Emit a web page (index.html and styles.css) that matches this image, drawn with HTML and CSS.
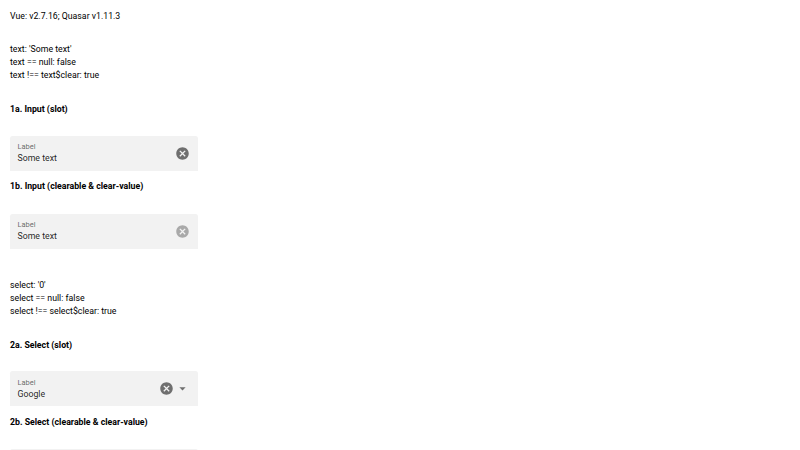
FILE: index.html
```html
<!DOCTYPE html>
<html lang="en">
<head>
<meta charset="utf-8">
<title>Vue / Quasar clearable</title>
<link rel="stylesheet" href="styles.css">
</head>
<body>
<main class="page">
  <p class="line version">Vue: v2.7.16; Quasar v1.11.3</p>
  <div class="state">
    <p class="line">text: 'Some text'</p>
    <p class="line">text == null: false</p>
    <p class="line">text !== text$clear: true</p>
  </div>
  <h2 class="heading">1a. Input (slot)</h2>
  <div class="field">
    <div class="field-main"><span class="field-label">Label</span><span class="field-value">Some text</span></div>
    <svg class="icon" viewBox="0 0 24 24"><path d="M12 2C6.47 2 2 6.47 2 12s4.47 10 10 10 10-4.47 10-10S17.53 2 12 2zm5 13.59L15.59 17 12 13.41 8.41 17 7 15.59 10.59 12 7 8.41 8.41 7 12 10.59 15.59 7 17 8.41 13.41 12 17 15.59z"/></svg>
  </div>
  <h2 class="heading heading-after-field">1b. Input (clearable &amp; clear-value)</h2>
  <div class="field">
    <div class="field-main"><span class="field-label">Label</span><span class="field-value">Some text</span></div>
    <svg class="icon icon-faded" viewBox="0 0 24 24"><path d="M12 2C6.47 2 2 6.47 2 12s4.47 10 10 10 10-4.47 10-10S17.53 2 12 2zm5 13.59L15.59 17 12 13.41 8.41 17 7 15.59 10.59 12 7 8.41 8.41 7 12 10.59 15.59 7 17 8.41 13.41 12 17 15.59z"/></svg>
  </div>
  <div class="state state-after-field">
    <p class="line">select: '0'</p>
    <p class="line">select == null: false</p>
    <p class="line">select !== select$clear: true</p>
  </div>
  <h2 class="heading heading-select">2a. Select (slot)</h2>
  <div class="field">
    <div class="field-main"><span class="field-label">Label</span><span class="field-value">Google</span></div>
    <svg class="icon" viewBox="0 0 24 24"><path d="M12 2C6.47 2 2 6.47 2 12s4.47 10 10 10 10-4.47 10-10S17.53 2 12 2zm5 13.59L15.59 17 12 13.41 8.41 17 7 15.59 10.59 12 7 8.41 8.41 7 12 10.59 15.59 7 17 8.41 13.41 12 17 15.59z"/></svg>
    <svg class="icon icon-arrow" viewBox="0 0 24 24"><path d="M7 10l5 5 5-5z"/></svg>
  </div>
  <h2 class="heading heading-last">2b. Select (clearable &amp; clear-value)</h2>
  <div class="field"></div>
</main>
</body>
</html>
```
FILE: styles.css
```css
html, body {
  margin: 0;
  padding: 0;
  height: 100%;
  overflow: hidden;
  background: #fff;
}
body {
  font-family: Roboto, "Liberation Sans", sans-serif;
  font-size: 8.75px;
  line-height: 13.125px;
  color: #000;
}
.page {
  width: 187.5px;
  height: 440.4px;
  overflow: hidden;
  padding: 9.6px 0 0 10px;
}
.line {
  margin: 0;
}
.state {
  margin-top: 20.5px;
}
.state-after-field {
  margin-top: 29.9px;
}
.heading {
  margin: 20.3px 0 20px;
  font-size: 8.75px;
  line-height: 13.125px;
  font-weight: 700;
}
.heading-after-field {
  margin: 8.5px 0 21px;
}
.heading-select {
  margin: 20.65px 0 19.65px;
}
.heading-last {
  margin: 9.3px 0 20.4px;
}
.field {
  display: flex;
  align-items: center;
  gap: 1.2px;
  box-sizing: border-box;
  height: 35px;
  padding: 0 7.5px;
  background: #f2f2f2;
  border-radius: 2.5px 2.5px 0 0;
}
.field-main {
  flex: 1;
  display: flex;
  flex-direction: column;
  padding-bottom: 0.5px;
}
.field-label {
  font-size: 7.5px;
  line-height: 10px;
  color: rgba(0, 0, 0, 0.6);
}
.field-value {
  font-size: 8.75px;
  line-height: 12px;
  color: rgba(0, 0, 0, 0.87);
}
.icon {
  flex: none;
  width: 15px;
  height: 15px;
  fill: rgba(0, 0, 0, 0.54);
}
.icon-faded {
  fill: rgba(0, 0, 0, 0.3);
}
.icon-arrow {
  fill: rgba(0, 0, 0, 0.54);
}
```
